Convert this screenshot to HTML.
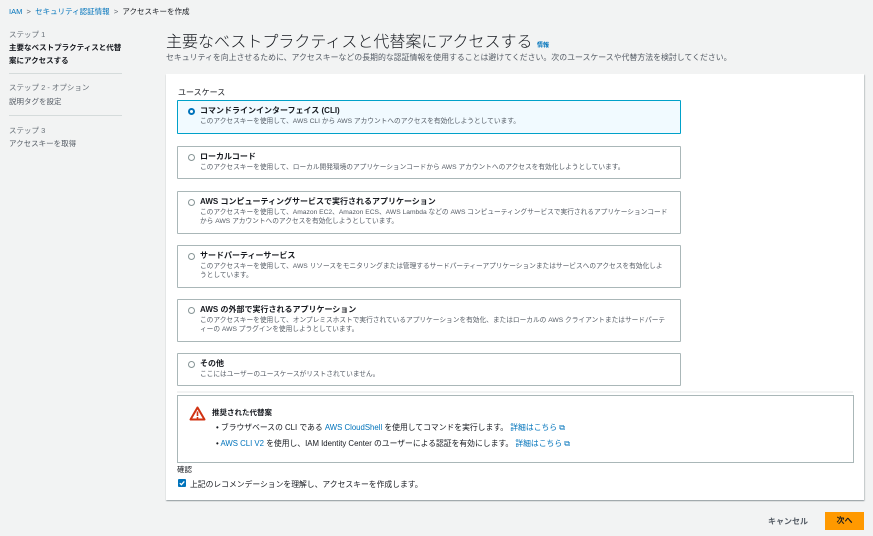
<!DOCTYPE html>
<html><head><meta charset="utf-8"><style>
*{margin:0;padding:0;box-sizing:border-box}
body{width:873px;height:536px;background:#f2f3f3;font-family:"Liberation Sans","Noto Sans CJK JP",sans-serif;color:#16191f;position:relative;overflow:hidden}
.a{position:absolute;white-space:nowrap}
.l{color:#0073bb}
.box{position:absolute;left:177px;width:504px;border:1px solid #aab7b8;background:#fff;border-radius:1px}
.box.sel{background:#f1faff;border-color:#00a1c9}
.rd{position:absolute;left:10px;top:7px;width:7px;height:7px;border:1px solid #879596;border-radius:50%;background:#fff}
.sel .rd{border:2px solid #0073bb}
.t{position:absolute;left:22px;top:4px;font-size:8px;font-weight:bold;white-space:nowrap}
.d{position:absolute;left:22px;top:16px;font-size:6.7px;line-height:9px;color:#545b64;width:468px}
.hr{position:absolute;left:9px;width:113px;height:1px;background:#d5dbdb}
.sm{font-size:7.5px;color:#687078}
.sb{font-size:7.5px}
</style></head><body>
<div class="a" style="left:9px;top:6px;font-size:7.5px"><span class="l">IAM</span> <span style="color:#545b64">&nbsp;&gt;&nbsp;</span> <span class="l">セキュリティ認証情報</span> <span style="color:#545b64">&nbsp;&gt;&nbsp;</span> アクセスキーを作成</div>

<div class="a sm" style="left:9px;top:29px">ステップ 1</div>
<div class="a sb" style="left:9px;top:41px;font-weight:bold;line-height:13px;white-space:normal;width:115px">主要なベストプラクティスと代替案にアクセスする</div>
<div class="hr" style="top:73px"></div>
<div class="a sm" style="left:9px;top:82px">ステップ 2 - オプション</div>
<div class="a sb" style="left:9px;top:96px;color:#545b64">説明タグを設定</div>
<div class="hr" style="top:115px"></div>
<div class="a sm" style="left:9px;top:125px">ステップ 3</div>
<div class="a sb" style="left:9px;top:138px;color:#545b64">アクセスキーを取得</div>

<div class="a" style="left:166px;top:28px;font-size:16px;font-weight:300">主要なベストプラクティスと代替案にアクセスする <span class="l" style="font-size:6px;font-weight:bold">情報</span></div>
<div class="a" style="left:166px;top:52px;font-size:7.9px;color:#545b64">セキュリティを向上させるために、アクセスキーなどの長期的な認証情報を使用することは避けてください。次のユースケースや代替方法を検討してください。</div>

<div class="a" style="left:166px;top:74px;width:698px;height:426px;background:#fff;box-shadow:0 1px 1px rgba(0,28,36,.3),1px 1px 1px rgba(0,28,36,.15)"></div>
<div class="a" style="left:178px;top:87px;font-size:8px">ユースケース</div>

<div class="box sel" style="top:100px;height:34px"><div class="rd"></div><div class="t">コマンドラインインターフェイス (CLI)</div><div class="d">このアクセスキーを使用して、AWS CLI から AWS アカウントへのアクセスを有効化しようとしています。</div></div>
<div class="box" style="top:146px;height:33px"><div class="rd"></div><div class="t">ローカルコード</div><div class="d">このアクセスキーを使用して、ローカル開発環境のアプリケーションコードから AWS アカウントへのアクセスを有効化しようとしています。</div></div>
<div class="box" style="top:191px;height:43px"><div class="rd"></div><div class="t">AWS コンピューティングサービスで実行されるアプリケーション</div><div class="d">このアクセスキーを使用して、Amazon EC2、Amazon ECS、AWS Lambda などの AWS コンピューティングサービスで実行されるアプリケーションコードから AWS アカウントへのアクセスを有効化しようとしています。</div></div>
<div class="box" style="top:245px;height:43px"><div class="rd"></div><div class="t">サードパーティーサービス</div><div class="d">このアクセスキーを使用して、AWS リソースをモニタリングまたは管理するサードパーティーアプリケーションまたはサービスへのアクセスを有効化しようとしています。</div></div>
<div class="box" style="top:299px;height:43px"><div class="rd"></div><div class="t">AWS の外部で実行されるアプリケーション</div><div class="d">このアクセスキーを使用して、オンプレミスホストで実行されているアプリケーションを有効化、またはローカルの AWS クライアントまたはサードパーティーの AWS プラグインを使用しようとしています。</div></div>
<div class="box" style="top:353px;height:33px"><div class="rd"></div><div class="t">その他</div><div class="d">ここにはユーザーのユースケースがリストされていません。</div></div>

<div class="a" style="left:177px;top:391px;width:676px;height:2px;background:#f2f3f3"></div>
<div class="a" style="left:177px;top:395px;width:677px;height:68px;border:1px solid #aab7b8;background:#fff"></div>
<svg class="a" style="left:189px;top:406px" width="17" height="15" viewBox="0 0 17 15"><path d="M8.5 1.5L1.5 13.5h14z" fill="none" stroke="#d13212" stroke-width="2" stroke-linejoin="round"/><rect x="7.7" y="5.5" width="1.6" height="4.5" fill="#d13212"/><rect x="7.7" y="11" width="1.6" height="1.5" fill="#d13212"/></svg>
<div class="a" style="left:212px;top:407px;font-size:7.5px;font-weight:bold">推奨された代替案</div>
<div class="a" style="left:216px;top:422px;font-size:7.8px">• ブラウザベースの CLI である <span class="l">AWS CloudShell</span> を使用してコマンドを実行します。 <span class="l">詳細はこちら ⧉</span></div>
<div class="a" style="left:216px;top:438px;font-size:7.8px">• <span class="l">AWS CLI V2</span> を使用し、IAM Identity Center のユーザーによる認証を有効にします。 <span class="l">詳細はこちら ⧉</span></div>

<div class="a" style="left:177px;top:464px;font-size:7.5px">確認</div>
<svg class="a" style="left:178px;top:479px" width="8" height="8" viewBox="0 0 8 8"><rect width="8" height="8" rx="1" fill="#0073bb"/><path d="M1.8 4.2L3.4 5.7 6.3 2.4" fill="none" stroke="#fff" stroke-width="1.3"/></svg>
<div class="a" style="left:190px;top:479px;font-size:7.8px">上記のレコメンデーションを理解し、アクセスキーを作成します。</div>

<div class="a" style="left:768px;top:516px;font-size:8px;color:#545b64;font-weight:bold">キャンセル</div>
<div class="a" style="left:825px;top:512px;width:39px;height:18px;background:#ff9900;font-size:8px;font-weight:bold;text-align:center;line-height:18px">次へ</div>
</body></html>
